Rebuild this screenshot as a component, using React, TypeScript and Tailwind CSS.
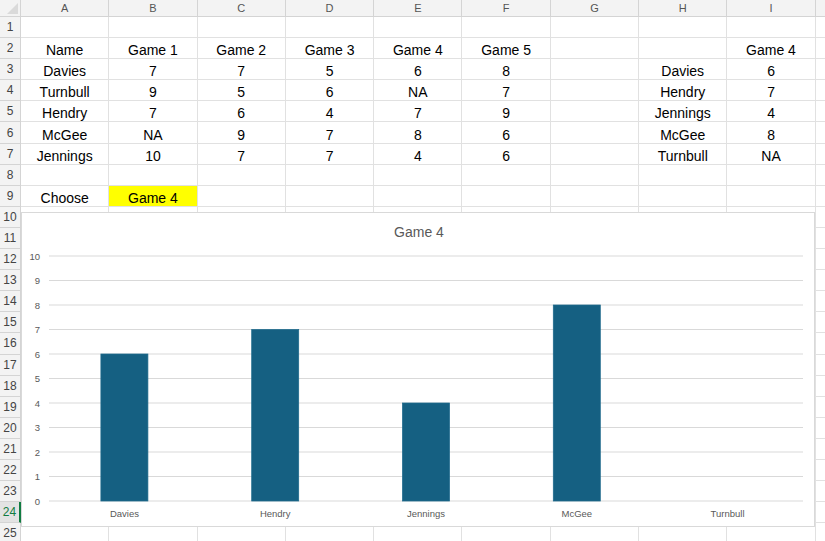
import React from 'react';

const COLS = ['A', 'B', 'C', 'D', 'E', 'F', 'G', 'H', 'I', 'J'];

// sheet contents, keyed by row number; index 0 = column A
const cells: Record<number, string[]> = {
  2: ['Name', 'Game 1', 'Game 2', 'Game 3', 'Game 4', 'Game 5', '', '', 'Game 4'],
  3: ['Davies', '7', '7', '5', '6', '8', '', 'Davies', '6'],
  4: ['Turnbull', '9', '5', '6', 'NA', '7', '', 'Hendry', '7'],
  5: ['Hendry', '7', '6', '4', '7', '9', '', 'Jennings', '4'],
  6: ['McGee', 'NA', '9', '7', '8', '6', '', 'McGee', '8'],
  7: ['Jennings', '10', '7', '7', '4', '6', '', 'Turnbull', 'NA'],
  9: ['Choose', 'Game 4'],
};

const chartData = [
  { name: 'Davies', value: 6 },
  { name: 'Hendry', value: 7 },
  { name: 'Jennings', value: 4 },
  { name: 'McGee', value: 8 },
  { name: 'Turnbull', value: null as number | null },
];

const ROW_COUNT = 26;
const SELECTED_ROW = 24;

function Chart() {
  const plotLeft = 27;
  const plotRight = 781;
  const zeroY = 288;
  const unit = 24.5;
  const catWidth = (plotRight - plotLeft) / chartData.length;
  const ticks = Array.from({ length: 11 }, (_, i) => i);

  return (
    <div className="absolute left-[21px] top-[212px] w-[794px] h-[315px] bg-white border border-[#d9d9d9]">
      <svg width="792" height="313" className="block">
        <text x="397" y="24" textAnchor="middle" fontSize="14" fill="#595959" fontFamily="'Liberation Sans', Arial, sans-serif">
          Game 4
        </text>
        {ticks.map((t) => {
          const y = zeroY - t * unit;
          return (
            <g key={t}>
              <line x1={plotLeft} x2={plotRight} y1={y} y2={y} stroke="#d9d9d9" strokeWidth="1" />
              <text x="18" y={y + 3.5} textAnchor="end" fontSize="9.5" fill="#595959" fontFamily="'Liberation Sans', Arial, sans-serif">
                {t}
              </text>
            </g>
          );
        })}
        {chartData.map((d, i) => {
          const cx = plotLeft + catWidth * (i + 0.5);
          return (
            <g key={d.name}>
              {d.value !== null && (
                <rect
                  x={cx - 23.5}
                  y={zeroY - d.value * unit}
                  width="47"
                  height={d.value * unit}
                  fill="#156082"
                  stroke="#1e6a8c"
                  strokeWidth="0.75"
                />
              )}
              <text x={cx} y="304" textAnchor="middle" fontSize="9.5" fill="#595959" fontFamily="'Liberation Sans', Arial, sans-serif">
                {d.name}
              </text>
            </g>
          );
        })}
      </svg>
    </div>
  );
}

export default function App() {
  const rows = Array.from({ length: ROW_COUNT }, (_, i) => i + 1);

  return (
    <div className="relative w-[825px] h-[541px] overflow-hidden bg-white font-['Liberation_Sans',Arial,sans-serif] text-black">
      <div className="grid grid-cols-[21px_repeat(10,88.3px)] grid-rows-[17px_repeat(26,21.1px)]">
        {/* corner */}
        <div className="relative bg-[#f3f3f3] border-r border-b border-[#d4d4d4]">
          <div className="absolute right-[2px] bottom-[2px] w-0 h-0 border-l-[11px] border-l-transparent border-b-[11px] border-b-[#dadada]" />
        </div>
        {COLS.map((c) => (
          <div
            key={c}
            className="flex items-center justify-center bg-[#f3f3f3] border-r border-b border-[#d4d4d4] text-[11px] text-[#555]"
          >
            {c !== 'J' && c}
          </div>
        ))}

        {rows.map((r) => (
          <React.Fragment key={r}>
            <div
              className={`flex items-center justify-center border-b border-[#d4d4d4] text-[12px] ${
                r === SELECTED_ROW
                  ? 'bg-[#e3e3e3] text-[#107c41] border-r-2 border-r-[#107c41]'
                  : 'bg-[#f3f3f3] text-[#444] border-r border-r-[#d4d4d4]'
              }`}
            >
              {r}
            </div>
            {COLS.map((c, ci) => {
              const value = cells[r]?.[ci] ?? '';
              const highlight = r === 9 && ci === 1;
              return (
                <div
                  key={c}
                  className={`flex items-end justify-center border-r border-b border-[#e1e1e1] text-[14px] leading-[16px] ${
                    highlight ? 'bg-[#ffff00]' : ''
                  }`}
                >
                  {value}
                </div>
              );
            })}
          </React.Fragment>
        ))}
      </div>

      <Chart />
    </div>
  );
}
